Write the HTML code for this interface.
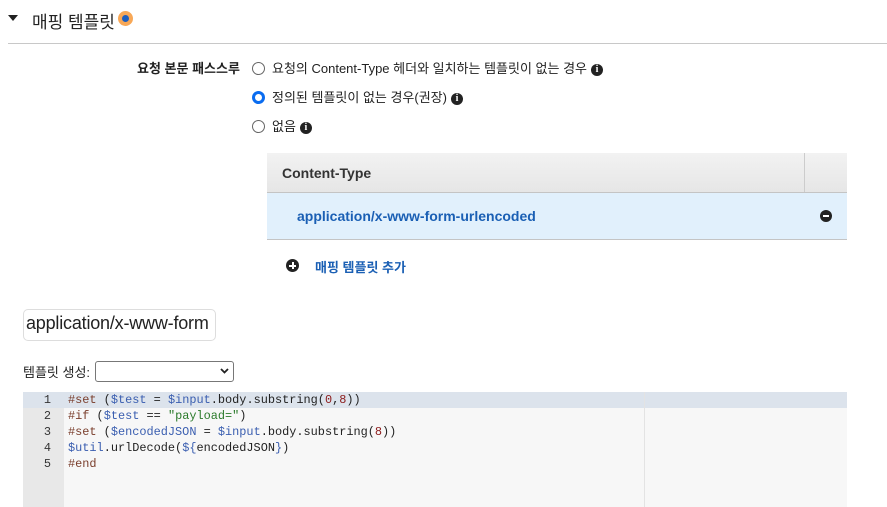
<!DOCTYPE html>
<html><head><meta charset="utf-8"><style>
body{margin:0;width:887px;height:507px;background:#fff;font-family:"Liberation Sans","Noto Sans CJK KR",sans-serif;position:relative;overflow:hidden;color:#222}
.a{position:absolute}
.r{width:13px;height:13px;border:1px solid #666;border-radius:50%;box-sizing:border-box;background:#fff}
.info{display:inline-block;width:12px;height:12px;border-radius:50%;background:#222;color:#fff;font-size:10px;font-weight:bold;text-align:center;line-height:12px;font-family:"Liberation Serif",serif;vertical-align:1px;margin-left:4px}
.code{font-family:"Liberation Mono",monospace;font-size:11.9px;line-height:16px;white-space:pre}
.k{color:#7a3e2c}.v{color:#3a5eb0}.n{color:#8b1a1a}.s{color:#2a7a2a}
.t{line-height:16px}
</style></head><body>
<div class="a" style="left:8px;top:15px;width:0;height:0;border-left:5px solid transparent;border-right:5px solid transparent;border-top:6px solid #222"></div>
<div class="a" style="left:32px;top:8px;font-size:17px;color:#222">매핑 템플릿</div>
<div class="a" style="left:118px;top:11px;width:15px;height:15px;border-radius:50%;background:#f8a857"></div>
<div class="a" style="left:122px;top:15px;width:7px;height:7px;border-radius:50%;background:#1d5fbf"></div>
<div class="a" style="left:8px;top:43px;width:879px;height:1px;background:#c8c8c8"></div>

<div class="a t" style="left:137px;top:61px;font-size:13px;font-weight:bold">요청 본문 패스스루</div>
<div class="a r" style="left:252px;top:62px"></div>
<div class="a t" style="left:272px;top:61px;font-size:13px">요청의 Content-Type 헤더와 일치하는 템플릿이 없는 경우<span class="info">i</span></div>
<div class="a r" style="left:252px;top:91px;border:3.5px solid #0a6cf0"></div>
<div class="a t" style="left:272px;top:90px;font-size:13px">정의된 템플릿이 없는 경우(권장)<span class="info">i</span></div>
<div class="a r" style="left:252px;top:120px"></div>
<div class="a t" style="left:272px;top:119px;font-size:13px">없음<span class="info">i</span></div>

<div class="a" style="left:267px;top:153px;width:580px;height:39px;background:linear-gradient(#f2f2f2,#e6e6e6);border-bottom:1px solid #c4c4c4"></div>
<div class="a" style="left:804px;top:153px;width:1px;height:39px;background:#ccc"></div>
<div class="a" style="left:282px;top:165px;font-size:14px;font-weight:bold;color:#333">Content-Type</div>
<div class="a" style="left:267px;top:193px;width:580px;height:46px;background:#e1f0fc;border-bottom:1px solid #c4c4c4"></div>
<div class="a" style="left:297px;top:208px;font-size:14px;font-weight:bold;color:#1a5fb4">application/x-www-form-urlencoded</div>
<div class="a" style="left:820px;top:210px;width:12px;height:12px;border-radius:50%;background:#222"></div>
<div class="a" style="left:823px;top:215px;width:6px;height:2px;background:#fff"></div>
<div class="a" style="left:286px;top:259px;width:13px;height:13px;border-radius:50%;background:#222"></div>
<div class="a" style="left:289px;top:264.5px;width:7px;height:2px;background:#fff"></div>
<div class="a" style="left:291.5px;top:262px;width:2px;height:7px;background:#fff"></div>
<div class="a" style="left:315px;top:257px;font-size:13px;font-weight:bold;color:#1a5fb4">매핑 템플릿 추가</div>

<div class="a" style="left:23px;top:309px;width:193px;height:32px;border:1px solid #ddd;border-radius:5px;box-sizing:border-box"></div>
<div class="a" style="left:26px;top:313px;font-size:18px;color:#222;letter-spacing:-0.2px">application/x-www-form</div>
<div class="a" style="left:23px;top:362px;font-size:13px">템플릿 생성:</div>
<div class="a" style="left:95px;top:361px;width:139px;height:21px;border:1px solid #777;border-radius:3px;box-sizing:border-box"></div>
<svg class="a" style="left:220px;top:368px" width="9" height="6"><path d="M1 1L4.5 4.5L8 1" stroke="#222" stroke-width="1.8" fill="none"/></svg>

<div class="a" style="left:23px;top:392px;width:824px;height:115px;background:#f7f7f7"></div>
<div class="a" style="left:23px;top:392px;width:41px;height:115px;background:#e8e8e8"></div>
<div class="a" style="left:23px;top:392px;width:824px;height:16px;background:#dce3ec"></div>
<div class="a" style="left:644px;top:392px;width:1px;height:115px;background:#e3e3e3"></div>
<div class="a code" style="left:23px;top:392px;width:28px;text-align:right;color:#333">1
2
3
4
5</div>
<div class="a code" style="left:68px;top:392px;color:#222"><span class="k">#set</span> (<span class="v">$test</span> = <span class="v">$input</span>.body.substring(<span class="n">0</span>,<span class="n">8</span>))
<span class="k">#if</span> (<span class="v">$test</span> == <span class="s">"payload="</span>)
<span class="k">#set</span> (<span class="v">$encodedJSON</span> = <span class="v">$input</span>.body.substring(<span class="n">8</span>))
<span class="v">$util</span>.urlDecode(<span class="v">${</span>encodedJSON<span class="v">}</span>)
<span class="k">#end</span></div>
</body></html>
